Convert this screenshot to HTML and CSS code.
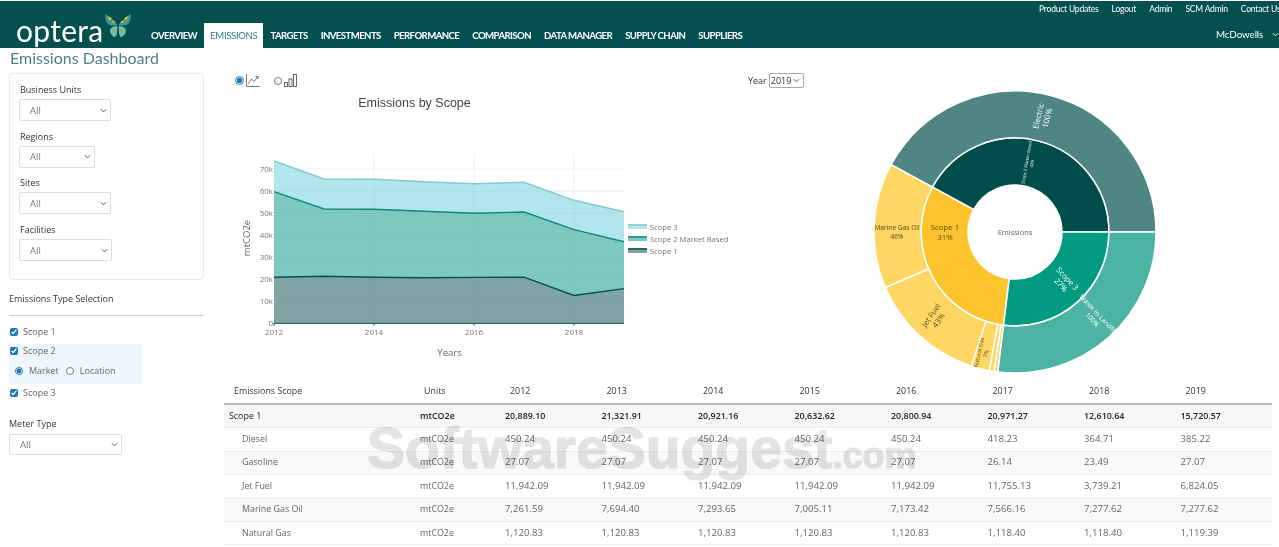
FILE: index.html
```html
<!DOCTYPE html>
<html lang="en">
<head>
<meta charset="utf-8">
<title>Emissions Dashboard</title>
<link rel="stylesheet" href="styles.css">
</head>
<body>
<header class="topbar">
  <a class="logo">optera<svg class="butterfly" viewBox="0 0 26 26" aria-hidden="true">
    <path d="M12.5 12 C9 8 5 4 0.5 1 C0 5 1 9 3 11 C6 13 10 13 12.5 12Z" fill="#3c9c93"/>
    <path d="M3 3 L7 5 L4.500 8Z M7 7 L11 9 L8 10.500Z" fill="#e0b23c"/>
    <path d="M13.500 12 C17 8 21 4 25.500 1 C26 5 25 9 23 11 C20 13 16 13 13.500 12Z" fill="#3c9c93"/>
    <path d="M23 3 L19 5 L21.500 8Z M19 7 L15 9 L18 10.500Z" fill="#e0b23c"/>
    <path d="M12.500 13 C9 13 6 14 5 17 C5 21 8 24 10 24 C12 23 12.500 18 12.500 13Z" fill="#6bbfae"/>
    <path d="M13.500 13 C17 13 20 14 21 17 C21 21 18 24 16 24 C14 23 13.500 18 13.500 13Z" fill="#6bbfae"/>
    <path d="M8 16 L11 16 L9.500 20Z M18 16 L15 16 L16.500 20Z" fill="#c9a23f"/>
    <path d="M12.600 7 H13.400 V23 H12.600Z" fill="#123f3f"/>
  </svg></a>
  <nav class="mainnav">
    <a>OVERVIEW</a><a class="active">EMISSIONS</a><a>TARGETS</a><a>INVESTMENTS</a><a>PERFORMANCE</a><a>COMPARISON</a><a>DATA MANAGER</a><a>SUPPLY CHAIN</a><a>SUPPLIERS</a>
  </nav>
  <div class="rightnav">
    <div class="toplinks"><a>Product Updates</a><a>Logout</a><a>Admin</a><a>SCM Admin</a><a>Contact Us</a></div>
    <div class="org">McDowells<svg class="chev" viewBox="0 0 8 5" aria-hidden="true"><path d="M1 1 L4 4 L7 1" fill="none" stroke="#fff" stroke-width="1.100"/></svg></div>
  </div>
</header>

<div class="page">
  <aside class="sidebar">
    <h1>Emissions Dashboard</h1>
    <section class="filters">
      <label class="field">Business Units<select class="w92"><option>All</option></select></label>
      <label class="field">Regions<select class="w76"><option>All</option></select></label>
      <label class="field">Sites<select class="w92"><option>All</option></select></label>
      <label class="field">Facilities<select class="w93"><option>All</option></select></label>
    </section>
    <h2>Emissions Type Selection</h2>
    <div class="checks">
      <label class="check"><input type="checkbox" checked>Scope 1</label>
      <div class="scope2">
        <label class="check"><input type="checkbox" checked>Scope 2</label>
        <div class="radios">
          <label><input type="radio" name="basis" checked>Market</label>
          <label><input type="radio" name="basis">Location</label>
        </div>
      </div>
      <label class="check"><input type="checkbox" checked>Scope 3</label>
    </div>
    <label class="field meter">Meter Type<select class="w113"><option>All</option></select></label>
  </aside>

  <main class="content">
    <div class="charts">
      <div class="linepanel">
        <div class="toggle">
          <input type="radio" name="view" checked>
          <svg class="ico" viewBox="0 0 14 13" aria-hidden="true"><path d="M.5 0 V12.500 H13.500" fill="none" stroke="#555" stroke-width=".8"/><path d="M2 10 L5.500 5 L8 7.500 L12 2.500 M9.500 2.500 H12 V5" fill="none" stroke="#555" stroke-width=".8"/></svg>
          <input class="second" type="radio" name="view">
          <svg class="ico bars" viewBox="0 0 13 13" aria-hidden="true"><g fill="none" stroke="#555" stroke-width=".9"><rect x=".5" y="8.500" width="3" height="4"/><rect x="5" y="5" width="3" height="7.500"/><rect x="9.500" y=".5" width="3" height="12"/></g></svg>
        </div>
        <svg class="linechart" viewBox="224 90 516 285" role="img" aria-label="Emissions by Scope">
          <text class="ctitle" x="414.500" y="107" text-anchor="middle">Emissions by Scope</text>
          <g class="grid">
            <path d="M274 169H624M274 191H624M274 213H624M274 235H624M274 257H624M274 279H624M274 301H624M374 153V323M474 153V323M574 153V323"/>
          </g>
          <path fill="#b0e6ec" d="M274 161L324 179L374 179.300L424 181.700L474 183.700L524 182.300L574 200.300L624 211.700V241.700L574 229.700L524 212L474 213.300L424 211.300L374 209.300L324 209L274 191.700Z"/>
          <path fill="#7dc9bf" d="M274 191.700L324 209L374 209.300L424 211.300L474 213.300L524 212L574 229.700L624 241.700V288.600L574 295.500L524 277.100L474 277.400L424 277.800L374 277.200L324 276.300L274 277.200Z"/>
          <path fill="#80a4a5" d="M274 277.200L324 276.300L374 277.200L424 277.800L474 277.400L524 277.100L574 295.500L624 288.600V323.300H274Z"/>
          <path class="vfaint" d="M374 180V323M474 184V323M574 201V323M274 279H624M274 301H624M274 191H624M274 213H624M274 235H624M274 257H624"/>
          <path class="l3" d="M274 161L324 179L374 179.300L424 181.700L474 183.700L524 182.300L574 200.300L624 211.700"/>
          <path class="l2" d="M274 191.700L324 209L374 209.300L424 211.300L474 213.300L524 212L574 229.700L624 241.700"/>
          <path class="l1" d="M274 277.200L324 276.300L374 277.200L424 277.800L474 277.400L524 277.100L574 295.500L624 288.600"/>
          <path class="base" d="M274 323.300H624M274 323V325.500M374 323V325.500M474 323V325.500M574 323V325.500"/>
          <g class="tick" text-anchor="end">
            <text x="273" y="172">70k</text><text x="273" y="194">60k</text><text x="273" y="216">50k</text><text x="273" y="238">40k</text><text x="273" y="260">30k</text><text x="273" y="282">20k</text><text x="273" y="304">10k</text><text x="273" y="326">0</text>
          </g>
          <g class="tick" text-anchor="middle">
            <text x="274" y="335">2012</text><text x="374" y="335">2014</text><text x="474" y="335">2016</text><text x="574" y="335">2018</text>
          </g>
          <text class="axis" x="449.500" y="356" text-anchor="middle">Years</text>
          <text class="axis" transform="translate(250 238) rotate(-90)" text-anchor="middle">mtCO2e</text>
          <rect x="628" y="224" width="19" height="5" fill="#b0e6ec"/><path class="l3" d="M628 225H647"/>
          <rect x="628" y="236" width="19" height="5" fill="#7dc9bf"/><path class="l2" d="M628 237H647"/>
          <rect x="628" y="248" width="19" height="5" fill="#80a4a5"/><path class="l1" d="M628 249H647"/>
          <g class="legend"><text x="650" y="229.500">Scope 3</text><text x="650" y="242">Scope 2 Market Based</text><text x="650" y="254">Scope 1</text></g>
        </svg>
      </div>
      <label class="year">Year<select><option>2019</option></select></label>
      <svg class="sunburst" viewBox="860 78 310 300" role="img" aria-label="Emissions sunburst">
        <g stroke="#fff" stroke-width="1.500">
          <path fill="#004d4b" d="M1062 232L1109 232A94 94 0 0 0 932.390 187.140L973.700 209.570A47 47 0 0 1 1062 232Z"/>
          <path fill="#fec42d" d="M932.390 187.140A94 94 0 0 0 1003.540 325.300L1009.270 278.650A47 47 0 0 1 973.700 209.570Z"/>
          <path fill="#029a81" d="M1003.540 325.300A94 94 0 0 0 1109 232L1062 232A47 47 0 0 1 1009.270 278.650Z"/>
          <path fill="#4f8583" d="M1109 232L1156 232A141 141 0 0 0 891.090 164.710L932.390 187.140A94 94 0 0 1 1109 232Z"/>
          <path fill="#fdd663" d="M932.390 187.140L891.090 164.710A141 141 0 0 0 885.410 287.540L928.600 269.030A94 94 0 0 1 932.390 187.140Z"/>
          <path fill="#fdd663" d="M928.600 269.030L885.410 287.540A141 141 0 0 0 971.430 366.110L985.950 321.400A94 94 0 0 1 928.600 269.030Z"/>
          <path fill="#fdd663" d="M985.950 321.400L971.430 366.110A141 141 0 0 0 989.310 370.650L997.870 324.430A94 94 0 0 1 985.950 321.400Z"/>
          <path fill="#fdd663" d="M997.870 324.430L989.310 370.650A141 141 0 0 0 994.160 371.450L1001.110 324.970A94 94 0 0 1 997.870 324.430Z"/>
          <path fill="#fdd663" d="M1001.110 324.970L994.160 371.450A141 141 0 0 0 997.810 371.940L1003.540 325.300A94 94 0 0 1 1001.110 324.970Z"/>
          <path fill="#4bb3a3" d="M1003.540 325.300L997.810 371.940A141 141 0 0 0 1156 232L1109 232A94 94 0 0 1 1003.540 325.300Z"/>
        </g>
        <g class="sb" text-anchor="middle">
          <text class="grey" x="1015" y="235">Emissions</text>
          <text class="wh big" transform="translate(1043 117) rotate(-76)"><tspan x="0" y="-2">Electric</tspan><tspan x="0" y="7">100%</tspan></text>
          <text class="wh tiny" transform="translate(1029 163) rotate(-80)"><tspan x="0" y="-1">Scope 2 Market Based</tspan><tspan x="0" y="4.500">42%</tspan></text>
          <text class="dk big" x="945" y="230">Scope 1<tspan x="945" y="240">31%</tspan></text>
          <text class="dk mid" x="897" y="230">Marine Gas Oil<tspan x="897" y="239">46%</tspan></text>
          <text class="dk big" transform="translate(935 318) rotate(-55)"><tspan x="0" y="-2">Jet Fuel</tspan><tspan x="0" y="7">43%</tspan></text>
          <text class="dk small" transform="translate(982 353) rotate(-78)"><tspan x="0" y="-1">Natural Gas</tspan><tspan x="0" y="6">7%</tspan></text>
          <text class="wh big" transform="translate(1064 282) rotate(47)"><tspan x="0" y="-2">Scope 3</tspan><tspan x="0" y="7">27%</tspan></text>
          <text class="wh mid" transform="translate(1095 317) rotate(47)"><tspan x="0" y="-2">Waste to Landfill</tspan><tspan x="0" y="6">100%</tspan></text>
        </g>
      </svg>
    </div>

    <div class="tablewrap">
      <table class="data">
        <thead>
          <tr><th>Emissions Scope</th><th>Units</th><th>2012</th><th>2013</th><th>2014</th><th>2015</th><th>2016</th><th>2017</th><th>2018</th><th>2019</th></tr>
        </thead>
        <tbody>
          <tr class="total"><td>Scope 1</td><td>mtCO2e</td><td>20,889.10</td><td>21,321.91</td><td>20,921.16</td><td>20,632.62</td><td>20,800.94</td><td>20,971.27</td><td>12,610.64</td><td>15,720.57</td></tr>
          <tr><td>Diesel</td><td>mtCO2e</td><td>450.24</td><td>450.24</td><td>450.24</td><td>450.24</td><td>450.24</td><td>418.23</td><td>364.71</td><td>385.22</td></tr>
          <tr class="alt"><td>Gasoline</td><td>mtCO2e</td><td>27.07</td><td>27.07</td><td>27.07</td><td>27.07</td><td>27.07</td><td>26.14</td><td>23.49</td><td>27.07</td></tr>
          <tr><td>Jet Fuel</td><td>mtCO2e</td><td>11,942.09</td><td>11,942.09</td><td>11,942.09</td><td>11,942.09</td><td>11,942.09</td><td>11,755.13</td><td>3,739.21</td><td>6,824.05</td></tr>
          <tr class="alt"><td>Marine Gas Oil</td><td>mtCO2e</td><td>7,261.59</td><td>7,694.40</td><td>7,293.65</td><td>7,005.11</td><td>7,173.42</td><td>7,566.16</td><td>7,277.62</td><td>7,277.62</td></tr>
          <tr><td>Natural Gas</td><td>mtCO2e</td><td>1,120.83</td><td>1,120.83</td><td>1,120.83</td><td>1,120.83</td><td>1,120.83</td><td>1,118.40</td><td>1,118.40</td><td>1,119.39</td></tr>
        </tbody>
      </table>
      <div class="watermark">SoftwareSuggest<span>.com</span></div>
    </div>
  </main>
</div>
</body>
</html>
```

FILE: styles.css
```css
* { box-sizing: border-box; }
html, body { margin: 0; padding: 0; background: #fff; }
body {
  width: 1279px;
  height: 547px;
  overflow: hidden;
  font-family: "Open Sans", sans-serif;
  color: #555;
}

/* header */
.topbar {
  display: flex;
  height: 47px;
  margin-top: 1px;
  background: #04504f;
  color: #fff;
  font-family: "Lato", sans-serif;
  overflow: hidden;
}
.logo {
  display: flex;
  align-items: flex-start;
  flex: none;
  width: 151px;
  padding: 12px 0 0 16px;
  font-size: 30px;
  font-weight: 400;
  line-height: 34px;
  letter-spacing: .3px;
}
.butterfly { width: 26px; height: 26px; margin-left: 1px; }
.mainnav { display: flex; align-items: flex-end; gap: 1px; margin-left: -6px; }
.mainnav a {
  height: 25px;
  padding: 0 6px;
  font-size: 9.6px;
  font-weight: 700;
  line-height: 25px;
  letter-spacing: -.58px;
  white-space: nowrap;
}
.mainnav a.active { background: #fff; color: #2f7f7c; font-weight: 400; letter-spacing: -.35px; }
.rightnav { display: flex; flex-direction: column; flex: none; width: 240px; margin-left: auto; }
.toplinks {
  display: flex;
  gap: 13px;
  height: 26px;
  padding-top: 2px;
  font-size: 8.5px;
  line-height: 12px;
  letter-spacing: -.2px;
  white-space: nowrap;
}
.org {
  display: flex;
  align-items: center;
  padding-left: 177px;
  font-size: 9.8px;
  line-height: 14px;
  letter-spacing: -.1px;
}
.chev { width: 8px; height: 5px; margin-left: 9px; }

/* page */
.page { display: grid; grid-template-columns: 224px 1048px; }
.sidebar { padding: 0 20px 0 9px; }
h1 {
  margin: 0;
  padding-left: 1px;
  height: 25px;
  font-family: "Lato", sans-serif;
  font-size: 16px;
  font-weight: 400;
  line-height: 20px;
  color: #4f7e80;
}
.filters {
  height: 207px;
  padding: 9px 10px 0;
  border: 1px solid #eaeaea;
  border-radius: 4px;
}
.field {
  display: block;
  height: 46.7px;
  font-size: 9px;
  line-height: 13px;
  color: #333;
}
select {
  display: block;
  height: 22px;
  margin: 3px 0 0 -1px;
  padding: 0 0 0 10px;
  appearance: none;
  border: 1px solid #ddd;
  border-radius: 2px;
  background: #fff url("data:image/svg+xml,%3Csvg xmlns='http://www.w3.org/2000/svg' viewBox='0 0 8 5'%3E%3Cpath d='M1 1l3 3 3-3' fill='none' stroke='%23555' stroke-width='1.1'/%3E%3C/svg%3E") no-repeat right 3px center / 7px 5px;
  font-family: "Open Sans", sans-serif;
  font-size: 9.5px;
  color: #777;
}
.w92 { width: 92px; }
.w76 { width: 76px; }
.w93 { width: 93px; }
.w113 { width: 113px; }
h2 {
  margin: 12px 0 0;
  height: 24px;
  border-bottom: 1px solid #ccc;
  font-size: 9px;
  font-weight: 400;
  line-height: 13px;
  color: #333;
}
.checks { padding-top: 7px; font-size: 9px; color: #666; }
.check { display: flex; align-items: center; height: 19px; padding-bottom: 2px; line-height: 13px; }
.check input { width: 8px; height: 8px; margin: 0 5px 0 1px; accent-color: #1f78b4; }
.scope2 { display: flex; flex-direction: column; width: 133px; height: 40px; margin-top: 2px; background: #eef7fd; }
.scope2 .check { height: 15px; }
.radios { display: flex; align-items: center; gap: 7px; height: 25px; padding: 0 0 2px 6px; }
.radios label { display: flex; align-items: center; }
.radios input { width: 8px; height: 8px; margin: 0 6px 0 0; accent-color: #1f78b4; }
.meter { margin-top: 14px; }
.meter select { margin: 4px 0 0; height: 21px; }

/* charts */
.content { padding-top: 25px; }
.charts { display: flex; align-items: flex-start; height: 307px; }
.linepanel { flex: none; width: 516px; }
.toggle { display: flex; align-items: center; height: 17px; padding: 0 0 2px 11px; }
.toggle input { width: 9px; height: 9px; margin: 0 2px 0 0; accent-color: #1f78b4; }
.toggle input.second { width: 8px; height: 8px; margin: 0 2px 0 14px; }
.ico { width: 14px; height: 13px; }
.bars { width: 13px; }
.linechart { display: block; width: 516px; height: 285px; }
.ctitle { font-family: "Liberation Sans", sans-serif; font-size: 12.5px; fill: #444; }
.grid path { fill: none; stroke: #efefef; stroke-width: 1; }
.vfaint { fill: none; stroke: rgba(90, 140, 140, .07); stroke-width: 1; }
.l1, .l2, .l3 { fill: none; stroke-width: 1.4; }
.l1 { stroke: #044f4e; }
.l2 { stroke: #0f8a76; }
.l3 { stroke: #84c9cf; }
.base { fill: none; stroke: #044f4e; stroke-width: 1; }
.tick text { font-size: 8px; fill: #777; }
.axis { font-size: 9.5px; fill: #666; }
.legend text { font-size: 7.6px; fill: #777; }

.year {
  display: flex;
  flex: none;
  align-items: center;
  gap: 2px;
  width: 56px;
  height: 15px;
  margin-left: 8px;
  font-size: 9px;
  color: #333;
}
.year select { width: 36px; height: 15px; margin: 0; padding: 0 0 0 1px; border: 1px solid #aaa; color: #333; font-size: 9px; }
.sunburst { display: block; flex: none; width: 310px; height: 300px; margin: 5px 0 0 56px; }
.sb text { font-family: "Open Sans", sans-serif; }
.grey { font-size: 7.5px; fill: #666; }
.wh { fill: #fff; }
.dk { fill: #5c4b14; }
.big { font-size: 7.8px; }
.mid { font-size: 6.6px; }
.small { font-size: 5.5px; }
.tiny { font-size: 4.2px; }

/* table */
.tablewrap { position: relative; }
.data {
  width: 1048px;
  table-layout: fixed;
  border-collapse: separate;
  border-spacing: 0;
  font-size: 9.6px;
  color: #666;
}
.data th, .data td { padding: 0 0 2px 5px; text-align: left; white-space: nowrap; }
.data th { height: 25px; padding: 0 0 0 10px; border-bottom: 2px solid #bbb; font-size: 8.9px; font-weight: 400; color: #333; line-height: 21px; vertical-align: top; }
.data td { height: 23.4px; border-bottom: 1px solid #eee; }
.data th:nth-child(1) { width: 191px; }
.data th:nth-child(2) { width: 85px; padding-left: 9px; }
.data td:first-child { padding-left: 18px; font-size: 8.9px; }
.data td:nth-child(2) { padding-left: 5px; font-size: 8.9px; }
.data .alt td { background: #f9f9f9; }
.data .total td { background: #f7f7f7; color: #222; font-size: 8.9px; font-weight: 600; }
.data .total td:first-child { padding-left: 5px; font-weight: 400; }
.watermark {
  position: absolute;
  left: 143px;
  top: 38px;
  font-family: "Liberation Sans", sans-serif;
  font-size: 57px;
  font-weight: 700;
  line-height: 60px;
  color: #e4e4e4;
  -webkit-text-stroke: 1.2px #e4e4e4;
  mix-blend-mode: multiply;
  white-space: nowrap;
  pointer-events: none;
}
.watermark span { font-size: 36px; }
```
